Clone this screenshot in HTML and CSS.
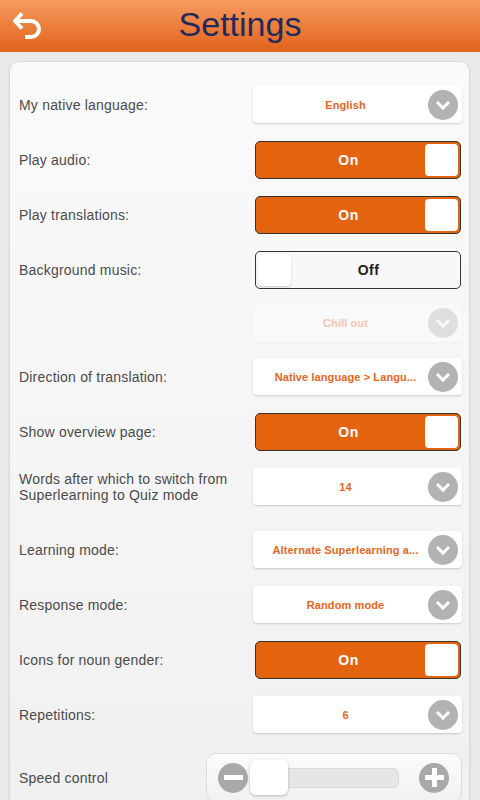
FILE: index.html
```html
<!DOCTYPE html>
<html lang="en">
<head>
    <meta charset="UTF-8">
    <meta name="viewport" content="width=device-width, initial-scale=1.0">
    <title>Settings</title>
    <link rel="stylesheet" href="styles.css">
</head>
<body>
    <header class="topbar">
        <button class="back-btn" aria-label="Back">
            <svg width="52" height="52" viewBox="0 0 52 52">
                <path d="M22 13.5 L15 21 L22 28.5 M15 21 H31 A8 8 0 0 1 31 37 H25" fill="none" stroke="#fff" stroke-width="4" stroke-linejoin="round"/>
            </svg>
        </button>
        <h1>Settings</h1>
        <span></span>
    </header>

    <main class="card">
        <div class="row">
            <span class="label">My native language:</span>
            <div class="select"><span class="value">English</span><span class="chev"></span></div>
        </div>
        <div class="row">
            <span class="label">Play audio:</span>
            <div class="toggle on"><span class="toggle-text">On</span><span class="knob"></span></div>
        </div>
        <div class="row">
            <span class="label">Play translations:</span>
            <div class="toggle on"><span class="toggle-text">On</span><span class="knob"></span></div>
        </div>
        <div class="row">
            <span class="label">Background music:</span>
            <div class="toggle off"><span class="knob"></span><span class="toggle-text">Off</span></div>
        </div>
        <div class="row short">
            <span class="label"></span>
            <div class="select disabled"><span class="value">Chill out</span><span class="chev"></span></div>
        </div>
        <div class="row">
            <span class="label">Direction of translation:</span>
            <div class="select"><span class="value">Native language &gt; Langu...</span><span class="chev"></span></div>
        </div>
        <div class="row">
            <span class="label">Show overview page:</span>
            <div class="toggle on"><span class="toggle-text">On</span><span class="knob"></span></div>
        </div>
        <div class="row">
            <span class="label">Words after which to switch from Superlearning to Quiz mode</span>
            <div class="select"><span class="value">14</span><span class="chev"></span></div>
        </div>
        <div class="row spaced">
            <span class="label">Learning mode:</span>
            <div class="select"><span class="value">Alternate Superlearning a...</span><span class="chev"></span></div>
        </div>
        <div class="row">
            <span class="label">Response mode:</span>
            <div class="select"><span class="value">Random mode</span><span class="chev"></span></div>
        </div>
        <div class="row">
            <span class="label">Icons for noun gender:</span>
            <div class="toggle on"><span class="toggle-text">On</span><span class="knob"></span></div>
        </div>
        <div class="row">
            <span class="label">Repetitions:</span>
            <div class="select"><span class="value">6</span><span class="chev"></span></div>
        </div>
        <div class="row speed-row">
            <span class="label">Speed control</span>
            <div class="speed">
                <span class="round-btn minus"></span>
                <div class="track"><span class="thumb"></span></div>
                <span class="round-btn plus"></span>
            </div>
        </div>
    </main>
</body>
</html>
```

FILE: styles.css
```css
* {
    box-sizing: border-box;
}

body {
    margin: 0;
    font-family: "Liberation Sans", Arial, sans-serif;
    background-color: #e9e9e9;
    min-height: 100vh;
}

/* top bar */
.topbar {
    display: grid;
    grid-template-columns: 52px 1fr 52px;
    height: 52px;
    background: linear-gradient(#f79b5e, #e1621c);
}

.back-btn {
    padding: 0;
    border: none;
    background: none;
    cursor: pointer;
}

.back-btn svg {
    display: block;
}

.topbar h1 {
    margin: 0;
    padding-bottom: 4px;
    text-align: center;
    font-size: 34px;
    font-weight: normal;
    line-height: 48px;
    color: #1f2b5a;
}

/* settings card */
.card {
    margin: 9px 10px 0 9px;
    padding: 15px 7px 20px 9px;
    border: 1px solid #dadada;
    border-radius: 10px;
    background: linear-gradient(#fafafa, #f0f0f0);
    box-shadow: 0 1px 2px rgba(0, 0, 0, 0.08);
}

.row {
    display: flex;
    align-items: center;
    height: 55px;
}

.row.short {
    height: 52px;
}

.row.spaced {
    margin-top: 8px;
}

.row.speed-row {
    margin-top: 8px;
}

.label {
    flex: 1;
    padding-right: 8px;
    font-size: 14px;
    line-height: 16px;
    letter-spacing: 0.2px;
    color: #4b4b4b;
}

/* dropdowns */
.select {
    display: flex;
    align-items: center;
    width: 209px;
    height: 37px;
    padding: 0 4px 0 18px;
    background-color: #fff;
    border-radius: 4px;
    box-shadow: 0 1px 2px rgba(0, 0, 0, 0.18);
}

.select .value {
    flex: 1;
    min-width: 0;
    margin-right: 8px;
    white-space: nowrap;
    text-align: center;
    font-size: 11px;
    font-weight: bold;
    letter-spacing: 0.1px;
    color: #e8661c;
}

.select.disabled {
    opacity: 0.35;
    box-shadow: 0 1px 2px rgba(0, 0, 0, 0.08);
}

.chev {
    display: flex;
    align-items: center;
    justify-content: center;
    flex: none;
    width: 30px;
    height: 30px;
    border-radius: 50%;
    background-color: #b2b2b2;
}

.chev::before {
    content: '';
    width: 7px;
    height: 7px;
    margin-top: -4px;
    border-right: 3.5px solid #fff;
    border-bottom: 3.5px solid #fff;
    transform: rotate(45deg);
}

/* on/off switches */
.toggle {
    display: flex;
    align-items: center;
    width: 206px;
    height: 38px;
    margin: 0 1px 0 2px;
    padding: 0 2px;
    border: 1.5px solid #333;
    border-radius: 5px;
}

.toggle.on {
    background-color: #e4630f;
}

.toggle.off {
    background-color: #f8f8f8;
}

.toggle-text {
    flex: 1;
    text-align: center;
    font-size: 14px;
    font-weight: bold;
    letter-spacing: 0.5px;
}

.toggle.on .toggle-text {
    padding-left: 14px;
    color: #fff;
}

.toggle.off .toggle-text {
    padding-right: 12px;
    color: #222;
}

.knob {
    flex: none;
    width: 33px;
    height: 32px;
    background-color: #fff;
    border-radius: 4px;
}

.toggle.off .knob {
    box-shadow: 0 1px 2px rgba(0, 0, 0, 0.2);
}

/* speed slider */
.speed {
    display: flex;
    align-items: center;
    width: 256px;
    height: 50px;
    padding: 0 12px 0 11px;
    border: 1px solid #dcdcdc;
    border-radius: 10px;
    background: linear-gradient(#fbfbfb, #f1f1f1);
}

.round-btn {
    display: flex;
    align-items: center;
    justify-content: center;
    flex: none;
    width: 30px;
    height: 30px;
    border-radius: 50%;
    background-color: #a9a9a9;
}

.round-btn::before {
    content: '';
    width: 19px;
    height: 5px;
    background-color: #fff;
}

.round-btn.plus {
    margin-left: 20px;
    background-image: linear-gradient(#fff, #fff);
    background-size: 5px 19px;
    background-position: center;
    background-repeat: no-repeat;
}

.track {
    display: flex;
    align-items: center;
    flex: 1;
    height: 20px;
    margin-left: 2px;
    background-color: #e6e6e6;
    border: 1px solid #dadada;
    border-radius: 6px;
}

.thumb {
    flex: none;
    width: 38px;
    height: 35px;
    margin-left: -1px;
    background-color: #fff;
    border-radius: 6px;
    box-shadow: 0 1px 3px rgba(0, 0, 0, 0.25);
}
```
